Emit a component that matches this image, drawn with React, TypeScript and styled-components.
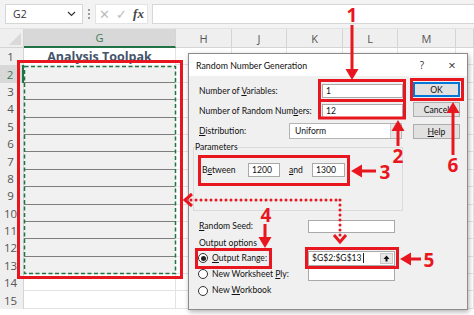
import React from 'react';
import styled, { createGlobalStyle } from 'styled-components';

const RED = '#e8161e';
const GREEN = '#217346';

const GlobalStyle = createGlobalStyle`
  html, body {
    margin: 0;
    padding: 0;
    background: #fff;
  }
  body {
    font-family: "Open Sans", "Noto Sans", sans-serif;
    color: #222;
  }
  * { box-sizing: border-box; }
`;

const Screen = styled.div`
  position: relative;
  width: 474px;
  height: 315px;
  overflow: hidden;
  background: #fff;
`;

/* ---------- formula bar ---------- */

const FormulaBar = styled.div`
  display: flex;
  align-items: center;
  height: 29px;
  padding-left: 5px;
  background: #f3f3f3;
  border-bottom: 1px solid #e2e2e2;
`;

const NameBox = styled.div`
  display: flex;
  align-items: center;
  justify-content: space-between;
  width: 78px;
  height: 20px;
  padding: 0 6px 0 7px;
  background: #fff;
  border: 1px solid #d6d6d6;
  font-size: 10.5px;
  color: #333;
`;

const Grip = styled.div`
  display: flex;
  flex-direction: column;
  gap: 2px;
  width: 12px;
  align-items: center;
  span {
    width: 2px;
    height: 2px;
    background: #9a9a9a;
  }
`;

const FxBox = styled.div`
  display: flex;
  align-items: center;
  justify-content: space-around;
  width: 53px;
  height: 20px;
  background: #fff;
  border: 1px solid #e4e4e4;
  font-size: 13px;
  color: #bcbcbc;
`;

const Fx = styled.span`
  font-family: "Liberation Serif", serif;
  font-style: italic;
  font-weight: bold;
  font-size: 13px;
  color: #444;
`;

const FormulaInput = styled.div`
  flex: 1;
  height: 20px;
  margin-left: 4px;
  background: #fff;
  border: 1px solid #d6d6d6;
  border-right: none;
`;

/* ---------- sheet grid ---------- */

const Sheet = styled.div`
  display: grid;
  grid-template-columns: 24px 152px 56px 55px 56px 55px 58px 1fr;
  grid-template-rows: 19px;
  grid-auto-rows: 17.4px;
`;

const Corner = styled.div`
  background: #efefef;
  border-right: 1px solid #d4d4d4;
  border-bottom: 1px solid #d4d4d4;
  position: relative;
  &::after {
    content: '';
    position: absolute;
    right: 2px;
    bottom: 2px;
    border-left: 12px solid transparent;
    border-bottom: 12px solid #d9d9d9;
  }
`;

const ColHead = styled.div<{ $selected?: boolean }>`
  display: flex;
  align-items: center;
  justify-content: center;
  font-size: 11px;
  background: ${(p) => (p.$selected ? '#d8d8d8' : '#efefef')};
  color: ${(p) => (p.$selected ? '#3c7a57' : '#555')};
  border-right: 1px solid #d4d4d4;
  border-bottom: ${(p) => (p.$selected ? `2px solid ${GREEN}` : '1px solid #d4d4d4')};
`;

const RowHead = styled.div<{ $selected?: boolean }>`
  display: flex;
  align-items: center;
  justify-content: center;
  padding-right: 2px;
  font-size: 11.5px;
  background: ${(p) => (p.$selected ? '#d8d8d8' : '#efefef')};
  color: ${(p) => (p.$selected ? '#3c7a57' : '#555')};
  border-right: ${(p) => (p.$selected ? `2px solid ${GREEN}` : '1px solid #d4d4d4')};
`;

const Cell = styled.div<{ $filled?: boolean; $line?: boolean }>`
  background: ${(p) => (p.$filled ? '#f1f1f1' : '#fff')};
  border-right: 1px solid ${(p) => (p.$filled ? '#f1f1f1' : '#e3e3e3')};
  border-bottom: ${(p) => (p.$line ? '1.5px solid #7d7d7d' : '1px solid #e3e3e3')};
`;

const TitleCell = styled.div`
  display: flex;
  align-items: center;
  justify-content: center;
  font-size: 12.5px;
  font-weight: 700;
  color: #44546a;
  border-right: 1px solid #e3e3e3;
`;

/* ---------- dialog ---------- */

const Dialog = styled.div`
  position: absolute;
  left: 188px;
  top: 53px;
  width: 280px;
  height: 257px;
  background: #f0f0f0;
  border: 1px solid #8c8c8c;
  box-shadow: 1px 2px 5px rgba(0, 0, 0, 0.3);
  font-family: Lato, "Open Sans", sans-serif;
  font-size: 8.6px;
  color: #111;
`;

const TitleBar = styled.div`
  display: flex;
  align-items: center;
  height: 22px;
  padding-left: 7px;
  background: #fff;
  font-size: 8.8px;
`;

const Title = styled.div`
  flex: 1;
`;

const TitleButton = styled.div<{ $big?: boolean }>`
  width: 30px;
  text-align: center;
  font-family: "Open Sans", sans-serif;
  font-size: ${(p) => (p.$big ? '13px' : '10px')};
  color: #333;
`;

const DialogBody = styled.div`
  display: flex;
`;

const FormColumn = styled.div`
  display: flex;
  flex-direction: column;
  width: 216px;
  padding: 5px 0 0 10px;
`;

const Row = styled.div<{ $h: number }>`
  display: flex;
  align-items: center;
  height: ${(p) => p.$h}px;
`;

const Label = styled.div<{ $w?: number }>`
  width: ${(p) => (p.$w ? `${p.$w}px` : 'auto')};
  flex-shrink: 0;
  white-space: nowrap;
`;

const TextBox = styled.div<{ $w: number; $h?: number }>`
  display: flex;
  align-items: center;
  width: ${(p) => p.$w}px;
  height: ${(p) => p.$h ?? 14}px;
  padding-left: 3px;
  background: #fff;
  border: 1px solid #a9a9a9;
  white-space: nowrap;
  overflow: hidden;
`;

const Select = styled(TextBox)`
  justify-content: space-between;
  padding: 0 0 0 5px;
  border-color: #b4b4b4;
`;

const SelectArrow = styled.div`
  width: 11px;
  height: 100%;
  background: #e6e6e6;
  border-left: 1px solid #cfcfcf;
`;

const Group = styled.fieldset`
  width: 210px;
  margin: 0 0 0 -6px;
  padding: 7px 0 30px 8px;
  border: 1px solid #dadada;
  legend {
    padding: 0;
    margin-left: -7px;
    line-height: 12px;
  }
`;

const Radio = styled.span<{ $on?: boolean }>`
  display: inline-flex;
  vertical-align: middle;
  align-items: center;
  justify-content: center;
  width: 10px;
  height: 10px;
  margin: -1px 4px 0 -1px;
  border: 1px solid #333;
  border-radius: 50%;
  background: #fff;
  &::after {
    content: '';
    width: 5px;
    height: 5px;
    border-radius: 50%;
    background: ${(p) => (p.$on ? '#222' : 'transparent')};
  }
`;

const RefButton = styled.div`
  display: flex;
  align-items: center;
  justify-content: center;
  width: 13px;
  height: 11px;
  margin-left: auto;
  margin-right: 1px;
  background: #e8e8e8;
  border: 1px solid #c8c8c8;
`;

const Caret = styled.span`
  display: inline-block;
  width: 1px;
  height: 10px;
  margin-left: 1px;
  background: #222;
`;

const ButtonColumn = styled.div`
  display: flex;
  flex-direction: column;
  gap: 5px;
  padding-top: 6px;
  margin-left: 8px;
`;

const DialogButton = styled.div<{ $default?: boolean; $gapTop?: number }>`
  display: flex;
  align-items: center;
  justify-content: center;
  width: 47px;
  height: 15px;
  margin-top: ${(p) => p.$gapTop ?? 0}px;
  background: #e1e1e1;
  border: 1px solid ${(p) => (p.$default ? '#0078d7' : '#adadad')};
  box-shadow: ${(p) => (p.$default ? 'inset 0 0 0 1px #0078d7' : 'none')};
`;

/* ---------- annotations ---------- */

const Overlay = styled.svg`
  position: absolute;
  left: 0;
  top: 0;
  pointer-events: none;
`;

const Num = styled.text`
  font-family: "Open Sans", "Noto Sans", sans-serif;
  font-weight: 700;
  font-size: 19px;
  fill: ${RED};
`;

type ArrowProps = { x1: number; y1: number; x2: number; y2: number };

const Arrow = ({ x1, y1, x2, y2 }: ArrowProps) => {
  const dx = x2 - x1;
  const dy = y2 - y1;
  const len = Math.hypot(dx, dy);
  const ux = dx / len;
  const uy = dy / len;
  const head = 11;
  const half = 6.5;
  const bx = x2 - ux * head;
  const by = y2 - uy * head;
  const px = -uy * half;
  const py = ux * half;
  return (
    <g>
      <line x1={x1} y1={y1} x2={bx + ux} y2={by + uy} stroke={RED} strokeWidth={3} />
      <polygon points={`${x2},${y2} ${bx + px},${by + py} ${bx - px},${by - py}`} fill={RED} />
    </g>
  );
};

const Box = ({ x, y, w, h }: { x: number; y: number; w: number; h: number }) => (
  <rect x={x} y={y} width={w} height={h} fill="none" stroke={RED} strokeWidth={3} />
);

const Annotations = () => (
  <Overlay width={474} height={315} viewBox="0 0 474 315">
    {/* copy marquee on G2:G13 */}
    <rect x={24.5} y={66.5} width={151} height={207} fill="none" stroke={GREEN} strokeWidth={1.5} strokeDasharray="4 2.5" />

    <Box x={18.5} y={61.5} w={163} h={216} />
    <Box x={319.5} y={80.5} w={85} h={20} />
    <Box x={319.5} y={100.5} w={85} h={17.5} />
    <Box x={199.5} y={156.5} w={149} h={28} />
    <Box x={411.5} y={79.5} w={51} h={20} />
    <Box x={196.5} y={249.5} w={74} h={18} />
    <Box x={306.5} y={248.5} w={91} h={19} />

    <Arrow x1={352} y1={25} x2={352} y2={80} />
    <Num x={352} y={22} textAnchor="middle">1</Num>

    <Arrow x1={398} y1={146} x2={398} y2={120} />
    <Num x={398} y={163} textAnchor="middle">2</Num>

    <Arrow x1={376} y1={171} x2={351} y2={171} />
    <Num x={385} y={179} textAnchor="middle">3</Num>

    <Arrow x1={453} y1={155} x2={453} y2={102} />
    <Num x={453} y={172} textAnchor="middle">6</Num>

    <Arrow x1={265} y1={224} x2={265} y2={248} />
    <Num x={266} y={222} textAnchor="middle">4</Num>

    <Arrow x1={421} y1={259} x2={400} y2={259} />
    <Num x={429} y={267} textAnchor="middle">5</Num>

    {/* dotted move path */}
    <line x1={191} y1={200} x2={340} y2={200} stroke={RED} strokeWidth={3} strokeDasharray="0 5" strokeLinecap="round" />
    <line x1={340} y1={200} x2={340} y2={238} stroke={RED} strokeWidth={3} strokeDasharray="0 5" strokeLinecap="round" />
    <polyline points="192,194 185,200 192,206" fill="none" stroke={RED} strokeWidth={3} />
    <polyline points="334,235 340,242 346,235" fill="none" stroke={RED} strokeWidth={3} />
  </Overlay>
);

/* ---------- data ---------- */

const columns = ['G', 'H', 'J', 'K', 'L', 'M', ''];
const rows = Array.from({ length: 15 }, (_, i) => i + 1);

const SpreadsheetRow = ({ n }: { n: number }) => {
  const inRange = n >= 2 && n <= 13;
  return (
    <>
      <RowHead $selected={n === 2}>{n}</RowHead>
      {n === 1 ? (
        <TitleCell>Analysis Toolpak</TitleCell>
      ) : (
        <Cell $filled={inRange} $line={n >= 2 && n <= 12} />
      )}
      {columns.slice(1).map((c, i) => (
        <Cell key={c + i} />
      ))}
    </>
  );
};

const App = () => (
  <Screen>
    <GlobalStyle />
    <FormulaBar>
      <NameBox>
        <span>G2</span>
        <svg width="9" height="6" viewBox="0 0 9 6">
          <path d="M1 1 L4.5 4.5 L8 1" fill="none" stroke="#333" strokeWidth="1.2" />
        </svg>
      </NameBox>
      <Grip>
        <span />
        <span />
        <span />
      </Grip>
      <FxBox>
        <span>✕</span>
        <span>✓</span>
        <Fx>fx</Fx>
      </FxBox>
      <FormulaInput />
    </FormulaBar>

    <Sheet>
      <Corner />
      {columns.map((c, i) => (
        <ColHead key={c + i} $selected={c === 'G'}>
          {c}
        </ColHead>
      ))}
      {rows.map((n) => (
        <SpreadsheetRow key={n} n={n} />
      ))}
    </Sheet>

    <Dialog>
      <TitleBar>
        <Title>Random Number Generation</Title>
        <TitleButton>?</TitleButton>
        <TitleButton $big>×</TitleButton>
      </TitleBar>
      <DialogBody>
        <FormColumn>
          <Row $h={20}>
            <Label $w={123}>
              Number of <u>V</u>ariables:
            </Label>
            <TextBox $w={81}>1</TextBox>
          </Row>
          <Row $h={20}>
            <Label $w={123}>
              Number of Random Num<u>b</u>ers:
            </Label>
            <TextBox $w={81}>12</TextBox>
          </Row>
          <Row $h={20}>
            <Label $w={90}>
              <u>D</u>istribution:
            </Label>
            <Select $w={113} $h={16}>
              Uniform
              <SelectArrow />
            </Select>
          </Row>
          <Group>
            <legend>Parameters</legend>
            <Row $h={20}>
              <Label $w={46}>
                B<u>e</u>tween
              </Label>
              <TextBox $w={32}>1200</TextBox>
              <Label $w={32} style={{ paddingLeft: 9 }}>
                <u>a</u>nd
              </Label>
              <TextBox $w={33}>1300</TextBox>
            </Row>
          </Group>
          <Row $h={20} style={{ marginTop: 5 }}>
            <Label $w={109}>
              <u>R</u>andom Seed:
            </Label>
            <TextBox $w={87} $h={13} />
          </Row>
          <Row $h={14}>
            <Label>Output options</Label>
          </Row>
          <Row $h={16}>
            <Label $w={109}>
              <Radio $on />
              <u>O</u>utput Range:
            </Label>
            <TextBox $w={87} $h={15}>
              $G$2:$G$13
              <Caret />
              <RefButton>
                <svg width="7" height="7" viewBox="0 0 7 7">
                  <path d="M3.5 0.5 L6.5 4 L4.5 4 L4.5 6.5 L2.5 6.5 L2.5 4 L0.5 4 Z" fill="#111" />
                </svg>
              </RefButton>
            </TextBox>
          </Row>
          <Row $h={16}>
            <Label $w={109}>
              <Radio />
              New Worksheet <u>P</u>ly:
            </Label>
            <TextBox $w={87} $h={13} />
          </Row>
          <Row $h={17}>
            <Label>
              <Radio />
              New <u>W</u>orkbook
            </Label>
          </Row>
        </FormColumn>
        <ButtonColumn>
          <DialogButton $default>OK</DialogButton>
          <DialogButton>Cancel</DialogButton>
          <DialogButton $gapTop={2}>
            <span>
              <u>H</u>elp
            </span>
          </DialogButton>
        </ButtonColumn>
      </DialogBody>
    </Dialog>

    <Annotations />
  </Screen>
);

export default App;
